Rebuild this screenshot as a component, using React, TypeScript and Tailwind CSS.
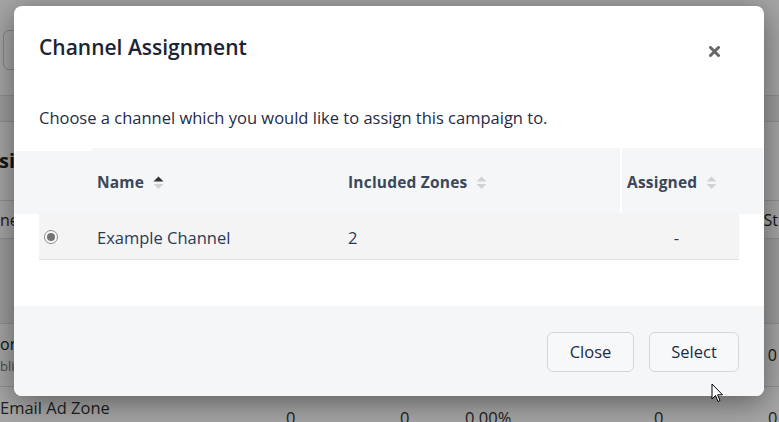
import React from "react";

const SortIcon = ({ active }: { active?: boolean }) => (
  <svg width="11" height="14" viewBox="0 0 11 14" className="ml-[9px]">
    <polygon points="0.5,5.5 5.5,0.5 10.5,5.5" fill={active ? "#333333" : "#cfd3d8"} />
    <polygon points="0.5,8 5.5,13 10.5,8" fill="#cfd3d8" />
  </svg>
);

export default function App() {
  const font = { fontFamily: "'Open Sans', Lato, Arial, sans-serif" };
  return (
    <div className="relative w-[779px] h-[422px] overflow-hidden bg-white text-[#222]" style={font}>
      {/* background page */}
      <div className="flex flex-col">
        <div className="h-[95px] pt-[30px] pl-[3px]">
          <div className="w-[120px] h-[40px] border border-[#cccccc] rounded-[6px]" />
        </div>
        <div className="h-[27px] border-y border-[#dddddd] bg-[#f2f2f2]" />
        <div className="h-[78px] flex items-center text-[20px] font-bold text-[#222]">
          <span className="-ml-[1px]">si</span>
        </div>
        <div className="h-[39px] border-y border-[#dddddd] flex items-center justify-between text-[16px]">
          <span className="text-[#4a1a1a]">ne</span>
          <span className="mr-[1px]">St</span>
        </div>
        <div className="h-[84px] bg-[#f2f2f2]" />
        <div className="h-[64px] border-y border-[#dddddd] flex items-center justify-between">
          <div className="flex flex-col leading-[22px]">
            <span className="text-[16px]">or</span>
            <span className="text-[13px] text-[#777]">bli</span>
          </div>
          <span className="text-[16px] mr-[2px]">0</span>
        </div>
        <div className="h-[40px] relative text-[16.5px] text-[#333]">
          <span className="absolute left-0 top-[10px] leading-[22px]">Email Ad Zone</span>
          <span className="absolute left-[286px] top-[20px] leading-[22px]">0</span>
          <span className="absolute left-[400px] top-[20px] leading-[22px]">0</span>
          <span className="absolute left-[465px] top-[20px] leading-[22px]">0.00%</span>
          <span className="absolute left-[654px] top-[20px] leading-[22px]">0</span>
          <span className="absolute left-[768px] top-[20px] leading-[22px]">0</span>
        </div>
      </div>

      {/* backdrop */}
      <div className="absolute inset-0 bg-black/35" />

      {/* modal */}
      <div className="absolute left-[14px] top-[6px] w-[750px] h-[390px] bg-white rounded-[8px] shadow-[0_6px_30px_rgba(0,0,0,0.45)] flex flex-col overflow-hidden">
        <div className="flex items-center justify-between pl-[25px] pr-[44px] pt-[27px]">
          <h2 className="text-[21px] leading-[28px] font-semibold text-[#1c2434]">Channel Assignment</h2>
          <svg width="11" height="11" viewBox="0 0 11 11" className="mt-[8px]">
            <path d="M1.5 1.5 L9.5 9.5 M9.5 1.5 L1.5 9.5" stroke="#666666" strokeWidth="3" strokeLinecap="round" />
          </svg>
        </div>
        <p className="mt-[45px] pl-[25px] text-[16.5px] leading-[24px] text-[#1f2c48]">
          Choose a channel which you would like to assign this campaign to.
        </p>

        {/* table header */}
        <div className="mt-[18px] h-[66px] flex text-[15.5px] tracking-[0.2px] font-bold text-[#3b475a]">
          <div className="w-[78px] mt-[3px] bg-[#f5f6f8]" />
          <div className="w-[528px] bg-[#f5f6f8] flex items-center pt-[4px]">
            <div className="w-[251px] pl-[5px] flex items-center">
              Name
              <SortIcon active />
            </div>
            <div className="pl-[5px] flex items-center">
              Included Zones
              <SortIcon />
            </div>
          </div>
          <div className="w-[2px] bg-white" />
          <div className="w-[141px] bg-[#f5f6f8] flex items-center pl-[5px] pt-[4px]">
            Assigned
            <SortIcon />
          </div>
        </div>

        {/* row */}
        <div className="mx-[25px] h-[46px] bg-[#f4f4f5] border-b border-[#dee1e5] flex items-center text-[16.5px] text-[#2a3955]">
          <div className="w-[53px] pl-[5px] flex items-center">
            <div className="w-[14px] h-[14px] rounded-full border border-[#8c8c8c] bg-[#fafafa] flex items-center justify-center">
              <div className="w-[8px] h-[8px] rounded-full bg-[#737373]" />
            </div>
          </div>
          <div className="w-[251px] pl-[5px] pt-[3px]">Example Channel</div>
          <div className="w-[279px] pl-[5px] pt-[3px]">2</div>
          <div className="w-[117px] text-center pr-[8px] pt-[3px]">-</div>
        </div>

        <div className="flex-1" />

        {/* footer */}
        <div className="h-[90px] bg-[#f5f6f8] flex justify-end items-start pt-[26px] pr-[25px] gap-[15px]">
          <button className="w-[87px] h-[40px] rounded-[6px] border border-[#d2d7df] bg-[#f7f8fa] text-[16.5px] text-[#1d2a44]">
            Close
          </button>
          <button className="w-[90px] h-[40px] rounded-[6px] border border-[#d2d7df] bg-[#f7f8fa] text-[16.5px] text-[#1d2a44]">
            Select
          </button>
        </div>
      </div>

      {/* cursor */}
      <svg width="13" height="21" viewBox="0 0 13 21" className="absolute left-[711px] top-[383px]">
        <path d="M1 1 L1 16 L4.5 12.5 L7 18.5 L9 17.5 L6.6 11.8 L11.5 11.8 Z" fill="#ffffff" stroke="#000000" strokeWidth="1" strokeLinejoin="round" />
      </svg>
    </div>
  );
}
